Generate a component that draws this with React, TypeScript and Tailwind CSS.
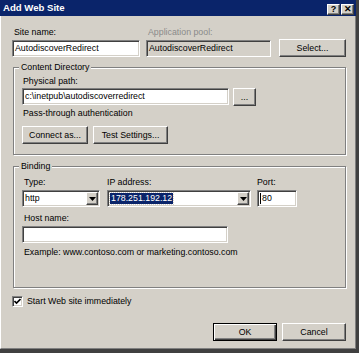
import type { ReactNode } from "react";

const sunken =
  "border border-t-[#808080] border-l-[#808080] border-b-white border-r-white shadow-[inset_1px_1px_0_#404040,inset_-1px_-1px_0_#d4d0c8]";
const raised =
  "border border-t-white border-l-white border-b-[#404040] border-r-[#404040] shadow-[inset_-1px_-1px_0_#808080] bg-[#d4d0c8]";

function Field({
  className = "",
  disabled = false,
  children,
}: {
  className?: string;
  disabled?: boolean;
  children?: ReactNode;
}) {
  return (
    <div
      className={`flex h-[17px] items-center p-[1px] ${sunken} ${
        disabled ? "bg-[#d4d0c8]" : "bg-white"
      } ${className}`}
    >
      <div className="flex min-w-0 flex-1 items-center overflow-hidden whitespace-nowrap px-[1px]">
        {children}
      </div>
    </div>
  );
}

function Select({ className = "", children }: { className?: string; children?: ReactNode }) {
  return (
    <div className={`flex h-[17px] items-stretch bg-white p-[1px] ${sunken} ${className}`}>
      <div className="flex min-w-0 flex-1 items-center overflow-hidden whitespace-nowrap px-[1px]">
        {children}
      </div>
      <div className={`flex w-[12px] items-center justify-center ${raised}`}>
        <svg width="7" height="4" viewBox="0 0 7 4">
          <polygon points="0,0 7,0 3.5,4" fill="#000" />
        </svg>
      </div>
    </div>
  );
}

function Button({
  className = "",
  primary = false,
  children,
}: {
  className?: string;
  primary?: boolean;
  children: ReactNode;
}) {
  return (
    <div
      className={`flex h-[18px] items-center justify-center ${
        primary
          ? "border border-black bg-[#d4d0c8] shadow-[inset_1px_1px_0_#fff,inset_-1px_-1px_0_#404040,inset_-2px_-2px_0_#808080]"
          : raised
      } ${className}`}
    >
      {children}
    </div>
  );
}

function TitleButton({ children }: { children: ReactNode }) {
  return (
    <div
      className={`flex h-[11px] w-[13px] items-center justify-center text-[9px] font-bold leading-none ${raised}`}
    >
      {children}
    </div>
  );
}

function Group({
  title,
  className = "",
  children,
}: {
  title: string;
  className?: string;
  children: ReactNode;
}) {
  return (
    <fieldset
      className={`ml-[1px] border border-[#808080] shadow-[1px_1px_0_#fff,inset_1px_1px_0_#fff] ${className}`}
    >
      <legend className="ml-[5px] bg-[#d4d0c8] px-[2px]">{title}</legend>
      {children}
    </fieldset>
  );
}

export default function App() {
  return (
    <div className="flex h-[353px] w-[359px] flex-col border-r-[3px] border-b-[4px] border-[#404040] bg-[#d4d0c8] font-['Liberation_Sans',Arial,sans-serif] text-[8.8px] leading-[11px] text-black">
      <div className="flex h-[16px] shrink-0 items-start justify-between bg-[#0a246a] pl-[3px] pr-[2px]">
        <span className="mt-[2px] text-[9.6px] leading-[12px] font-bold text-white">
          Add Web Site
        </span>
        <div className="mt-[4px] flex gap-[1px]">
          <TitleButton>?</TitleButton>
          <TitleButton>✕</TitleButton>
        </div>
      </div>

      <div className="flex flex-1 flex-col border-l border-r border-b border-l-white border-r-[#808080] border-b-[#808080] pt-[11px] pr-[9px] pl-[11px]">
        <div className="flex items-end">
          <div className="flex w-[128px] flex-col gap-[2px]">
            <span className="pl-[2px]">Site name:</span>
            <Field>AutodiscoverRedirect</Field>
          </div>
          <div className="ml-[6px] flex w-[125px] flex-col gap-[2px]">
            <span className="pl-[2px] text-[#8a8a8a]">Application pool:</span>
            <Field disabled>AutodiscoverRedirect</Field>
          </div>
          <Button className="ml-[8px] w-[67px]">Select...</Button>
        </div>

        <Group title="Content Directory" className="mt-[5px]">
          <div className="flex flex-col px-[8px] pt-[3px] pb-[10px]">
            <span className="pl-[1px]">Physical path:</span>
            <div className="mt-[1px] flex items-start gap-[4px]">
              <Field className="w-[207px]">{"c:\\inetpub\\autodiscoverredirect"}</Field>
              <Button className="w-[23px]">...</Button>
            </div>
            <span className="mt-[2px] pl-[1px]">Pass-through authentication</span>
            <div className="mt-[7px] flex gap-[5px]">
              <Button className="w-[66px]">Connect as...</Button>
              <Button className="w-[75px]">Test Settings...</Button>
            </div>
          </div>
        </Group>

        <Group title="Binding" className="mt-[6px]">
          <div className="flex flex-col px-[8px] pt-[5px] pb-[29px]">
            <div className="flex">
              <div className="flex w-[78px] flex-col gap-[2px]">
                <span className="pl-[2px]">Type:</span>
                <Select>http</Select>
              </div>
              <div className="ml-[7px] flex w-[144px] flex-col gap-[2px]">
                <span>IP address:</span>
                <Select>
                  <span className="bg-[#0a246a] px-[1px] text-white outline-1 outline-dotted outline-[#d4d0c8]">
                    178.251.192.12
                  </span>
                </Select>
              </div>
              <div className="ml-[6px] flex w-[40px] flex-col gap-[2px]">
                <span>Port:</span>
                <Field>
                  <span className="mr-[1px] h-[11px] w-[1px] bg-black" />
                  80
                </Field>
              </div>
            </div>
            <span className="mt-[6px] pl-[2px]">Host name:</span>
            <Field className="mt-[2px] w-[206px]" />
            <span className="mt-[4px] pl-[2px]">
              Example: www.contoso.com or marketing.contoso.com
            </span>
          </div>
        </Group>

        <div className="mt-[8px] flex items-center gap-[4px]">
          <div className={`flex h-[11px] w-[11px] items-center justify-center bg-white ${sunken}`}>
            <svg width="7" height="7" viewBox="0 0 7 7">
              <path d="M0.5 3 L2.5 5 L6.5 1" stroke="#000" strokeWidth="1.6" fill="none" />
            </svg>
          </div>
          <span>Start Web site immediately</span>
        </div>

        <div className="mt-[16px] flex justify-end gap-[5px]">
          <Button primary className="w-[64px]">
            OK
          </Button>
          <Button className="w-[64px]">Cancel</Button>
        </div>
      </div>
    </div>
  );
}
